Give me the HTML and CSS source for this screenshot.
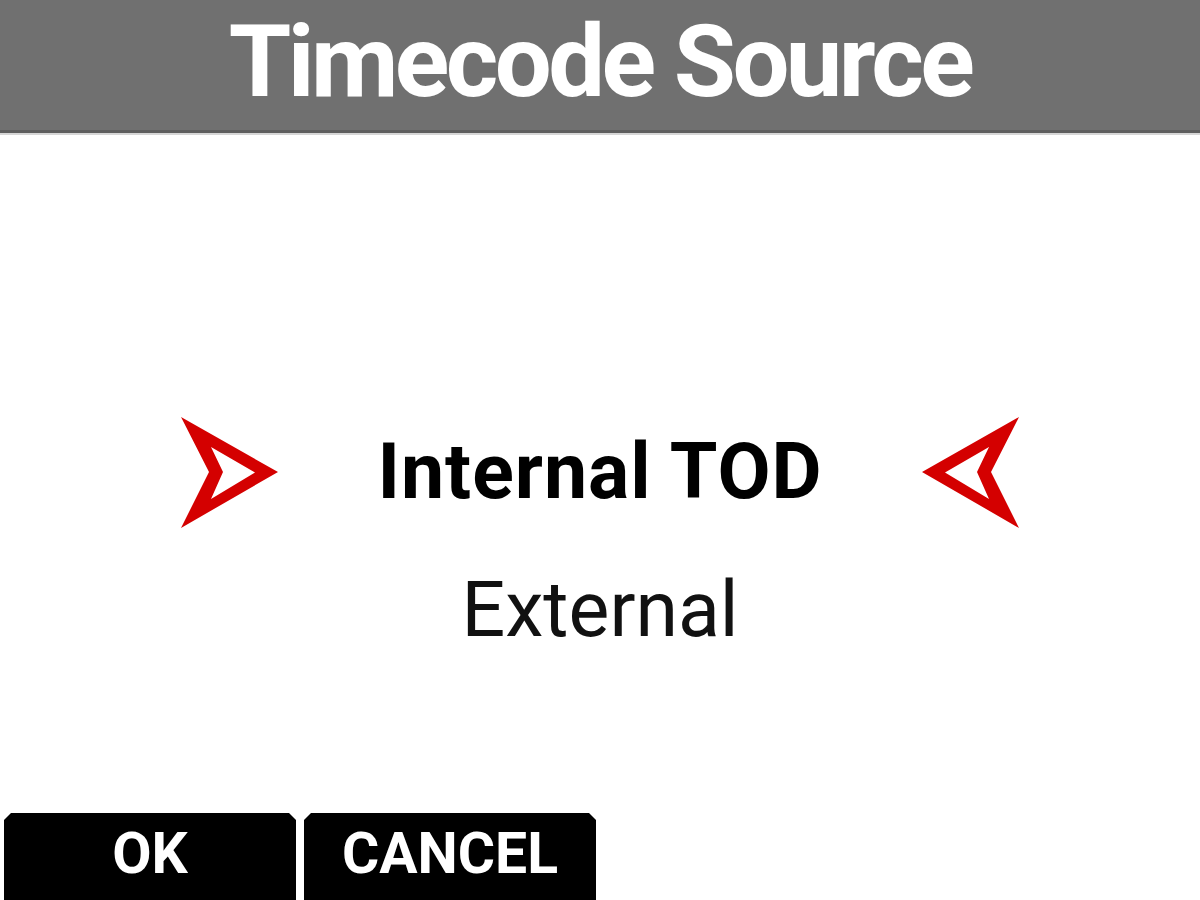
FILE: index.html
```html
<!DOCTYPE html>
<html>
<head>
<meta charset="utf-8">
<link rel="stylesheet" href="styles.css">
</head>
<body>
<div class="screen">
  <header class="title-bar">
    <h1 class="title">Timecode Source</h1>
  </header>
  <main class="options">
    <div class="selected-row">
      <svg class="arrow" viewBox="0 0 100 115" width="100" height="115">
        <path fill="#d40000" fill-rule="evenodd" d="M1 2 L98 57 L1 113 L29 57 Z M31 32 L43 57 L31 84 L75 57.5 Z"/>
      </svg>
      <div class="option selected">Internal TOD</div>
      <svg class="arrow" viewBox="0 0 100 115" width="100" height="115">
        <path fill="#d40000" fill-rule="evenodd" d="M99 2 L2 57 L99 113 L71 57 Z M69 32 L57 57 L69 84 L25 57.5 Z"/>
      </svg>
    </div>
    <div class="option other">External</div>
  </main>
  <footer class="softkeys">
    <div class="softkey">OK</div>
    <div class="softkey">CANCEL</div>
  </footer>
</div>
</body>
</html>
```

FILE: styles.css
```css
html, body {
  margin: 0;
  padding: 0;
  background: #ffffff;
}

.screen {
  width: 1200px;
  height: 900px;
  overflow: hidden;
  display: flex;
  flex-direction: column;
  font-family: Roboto, "Liberation Sans", sans-serif;
  background: #ffffff;
}

.title-bar {
  height: 130px;
  background: #707070;
  border-bottom: 3px solid #5e5e5e;
  box-shadow: 0 2px 0 #d6d6d6;
  display: flex;
  justify-content: center;
}

.title {
  margin: 0;
  color: #ffffff;
  font-size: 101px;
  font-weight: 700;
  line-height: 124px;
  letter-spacing: -3.6px;
}

.options {
  padding-top: 282px;
  display: flex;
  flex-direction: column;
}

.selected-row {
  display: grid;
  grid-template-columns: 100px 1fr 100px;
  align-items: center;
  padding: 0 180px;
  height: 115px;
}

.arrow {
  display: block;
}

.option {
  font-size: 77px;
  line-height: 77px;
  text-align: center;
  color: #000000;
}

.selected {
  font-weight: 700;
  letter-spacing: 1px;
}

.other {
  margin-top: 42px;
  font-weight: 400;
  color: #111111;
}

.softkeys {
  margin-top: auto;
  height: 87px;
  display: flex;
  gap: 8px;
  padding-left: 4px;
}

.softkey {
  width: 292px;
  height: 100px;
  box-sizing: border-box;
  padding-top: 12px;
  background: #000000;
  color: #ffffff;
  font-size: 57px;
  font-weight: 700;
  line-height: 57px;
  text-align: center;
  clip-path: polygon(7px 0, calc(100% - 7px) 0, 100% 7px, 100% 100%, 0 100%, 0 7px);
}
```
